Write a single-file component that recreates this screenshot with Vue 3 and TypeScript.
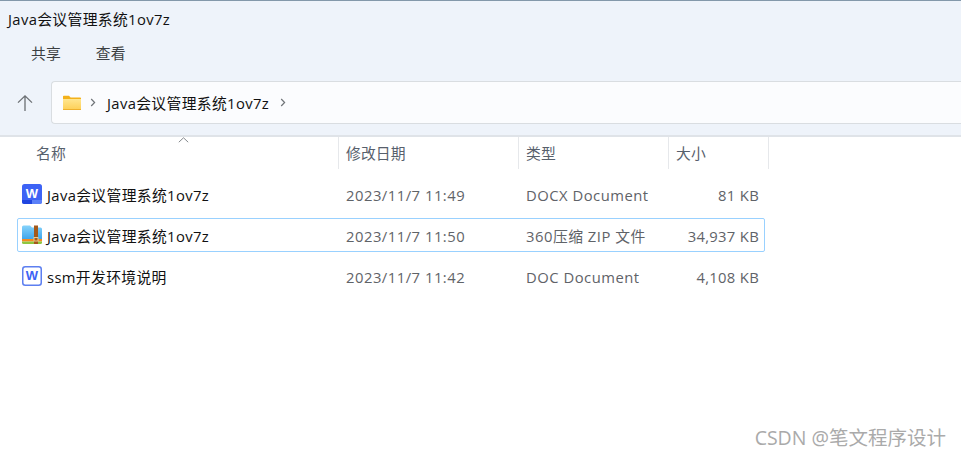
<script setup lang="ts">
interface FileRow {
  name: string
  date: string
  type: string
  size: string
  icon: 'docx' | 'zip' | 'doc'
  selected?: boolean
}
const title = 'Java会议管理系统1ov7z'
const rows: FileRow[] = [
  { name: title, date: '2023/11/7 11:49', type: 'DOCX Document', size: '81 KB', icon: 'docx' },
  { name: title, date: '2023/11/7 11:50', type: '360压缩 ZIP 文件', size: '34,937 KB', icon: 'zip', selected: true },
  { name: 'ssm开发环境说明', date: '2023/11/7 11:42', type: 'DOC Document', size: '4,108 KB', icon: 'doc' },
]
</script>

<template>
  <div class="window">
    <header class="chrome">
      <div class="title">{{ title }}</div>
      <nav class="menu">
        <span>共享</span>
        <span>查看</span>
      </nav>
      <div class="nav-row">
        <svg class="up" width="18" height="18" viewBox="0 0 18 18" fill="none" stroke="#6b6f73" stroke-width="1.3">
          <path d="M9 17V2M2 8.6 9 1.8l7 6.8" />
        </svg>
        <div class="address">
          <svg class="folder" width="20" height="16" viewBox="0 0 20 16">
            <defs>
              <linearGradient id="fold" x1="0" y1="0" x2="0" y2="1">
                <stop offset="0" stop-color="#ffe68f" />
                <stop offset="1" stop-color="#fdcf55" />
              </linearGradient>
            </defs>
            <path d="M1 1.500Q1 .8 1.800 .8H7l1.600 1.700h9.600q.8 0 .8 .8V5H1Z" fill="#f3b11b" />
            <path d="M1 4h18v10.200q0 .8-.8 .8H1.800q-.8 0-.8-.8Z" fill="url(#fold)" />
            <path d="M1 14h18v.4q0 .6-.8 .6H1.800q-.8 0-.8-.6Z" fill="#eeb02c" />
          </svg>
          <svg class="chev" width="6" height="9" viewBox="0 0 6 9" fill="none" stroke-width="1.2">
            <path d="M1.200 1 4.600 4.500 1.200 8" stroke="#707478" />
          </svg>
          <span class="crumb">{{ title }}</span>
          <svg class="chev chev-end" width="6" height="9" viewBox="0 0 6 9" fill="none" stroke-width="1.2">
            <path d="M1.200 1 4.600 4.500 1.200 8" stroke="#707478" />
          </svg>
        </div>
      </div>
    </header>

    <main class="list">
      <div class="head">
        <div class="hcell hname">
          名称
          <svg class="sort" width="11" height="6" viewBox="0 0 11 6" fill="none" stroke="#85898d" stroke-width="1">
            <path d="M.8 5.200 5.500 .8l4.700 4.400" />
          </svg>
        </div>
        <div class="hcell">修改日期</div>
        <div class="hcell">类型</div>
        <div class="hcell">大小</div>
      </div>

      <div class="rows">
        <div v-for="row in rows" :key="row.icon" class="row" :class="{ selected: row.selected }">
          <div class="cell name">
            <svg v-if="row.icon === 'docx'" class="ficon" width="20" height="20" viewBox="0 0 20 20">
              <rect width="20" height="20" rx="2.500" fill="#3d63f5" />
              <path d="M10 16h10v1.500Q20 20 17.500 20H10Z" fill="#5b80f8" />
              <path d="M0 16h10v4H2.500Q0 20 0 17.500Z" fill="#1f45e0" />
              <text x="10" y="13.600" class="wtext" fill="#fff">W</text>
            </svg>
            <svg v-else-if="row.icon === 'zip'" class="ficon" width="20" height="20" viewBox="0 0 20 20">
              <defs>
                <linearGradient id="zipblue" x1="0" y1="0" x2="0" y2="1">
                  <stop offset="0" stop-color="#86d3fb" />
                  <stop offset="1" stop-color="#3fa6ec" />
                </linearGradient>
              </defs>
              <path d="M0 2Q0 .5 1.500 .5H8l2 2h8.500Q20 2.500 20 4v10H0Z" fill="url(#zipblue)" />
              <rect y="14" width="20" height="2.500" fill="#f58a1f" />
              <path d="M0 16.500h20v1Q20 19 18.500 19h-17Q0 19 0 17.500Z" fill="#8fc640" />
              <rect x="12" y=".5" width="4" height="18.500" fill="#a4591a" />
              <rect x="12" y="12.500" width="4" height="3.500" fill="none" stroke="#e8c98f" stroke-width="1" />
            </svg>
            <svg v-else class="ficon" width="20" height="20" viewBox="0 0 20 20">
              <rect x=".75" y=".75" width="18.500" height="18.500" rx="2.500" fill="#fff" stroke="#5d7ff0" stroke-width="1.500" />
              <text x="10" y="14" class="wtext" fill="#3d63f5">W</text>
            </svg>
            <span class="fname">{{ row.name }}</span>
          </div>
          <div class="cell muted">{{ row.date }}</div>
          <div class="cell muted">{{ row.type }}</div>
          <div class="cell muted size">{{ row.size }}</div>
        </div>
      </div>
    </main>

    <div class="watermark">CSDN @笔文程序设计</div>
  </div>
</template>

<style>
html,
body {
  margin: 0;
  background: #fff;
}
</style>

<style scoped>
.window {
  position: relative;
  width: 961px;
  height: 456px;
  overflow: hidden;
  background: #fff;
  font-family: "Open Sans", "Noto Sans CJK SC", sans-serif;
  font-size: 14.800px;
  letter-spacing: 0.35px;
  color: #111;
}
.chrome {
  height: 137px;
  box-sizing: border-box;
  background: #eef3fa;
  border-top: 1px solid #8398aa;
  border-bottom: 2px solid #dfe3e8;
}
.title {
  height: 36px;
  padding-left: 8px;
  line-height: 37px;
  white-space: nowrap;
}
.menu {
  display: flex;
  gap: 35px;
  height: 44px;
  padding-left: 31px;
  line-height: 33px;
  color: #3c3f42;
  letter-spacing: 0.1px;
}
.nav-row {
  display: flex;
  align-items: center;
  height: 43px;
}
.up {
  margin: 0 17px 0 16px;
}
.address {
  flex: 1;
  display: flex;
  align-items: center;
  height: 43px;
  box-sizing: border-box;
  background: #fbfcfe;
  border: 1px solid #d9dde1;
  border-right: 0;
  border-radius: 4px 0 0 4px;
  padding-left: 10px;
}
.chev {
  margin-left: 8px;
}
.crumb {
  margin-left: 11px;
  white-space: nowrap;
}
.chev-end {
  margin-left: 11px;
}
.head {
  display: grid;
  grid-template-columns: 339px 180px 150px 100px;
  height: 32px;
}
.hcell {
  position: relative;
  padding-left: 7px;
  line-height: 32px;
  color: #57606c;
  letter-spacing: 0.1px;
  box-shadow: inset -1px 0 0 #e6e8eb;
}
.hname {
  padding-left: 36px;
}
.sort {
  position: absolute;
  left: 178px;
  top: 0;
}
.rows {
  display: flex;
  flex-direction: column;
  gap: 7px;
  padding: 8px 0 0 17px;
  width: 748px;
}
.row {
  display: grid;
  grid-template-columns: 322px 180px 150px 95px;
  height: 34px;
  box-sizing: border-box;
  border: 1px solid transparent;
  align-items: center;
}
.row.selected {
  border-color: #99d1ff;
  border-radius: 2px;
}
.cell {
  white-space: nowrap;
}
.name {
  display: flex;
  align-items: center;
  padding-left: 4px;
}
.ficon {
  flex: none;
  margin-right: 5px;
}
.wtext {
  font-family: "Liberation Sans", sans-serif;
  font-size: 13px;
  font-weight: 700;
  text-anchor: middle;
  letter-spacing: 0;
}
.muted {
  color: #5f6368;
  padding-left: 6px;
  padding-top: 1px;
  letter-spacing: 0.5px;
}
.size {
  text-align: right;
  padding: 1px 6px 0 0;
  letter-spacing: 0.3px;
}
.watermark {
  position: absolute;
  right: 15px;
  top: 422px;
  font-size: 19.500px;
  letter-spacing: 0;
  color: #aaa;
  white-space: nowrap;
}
</style>
